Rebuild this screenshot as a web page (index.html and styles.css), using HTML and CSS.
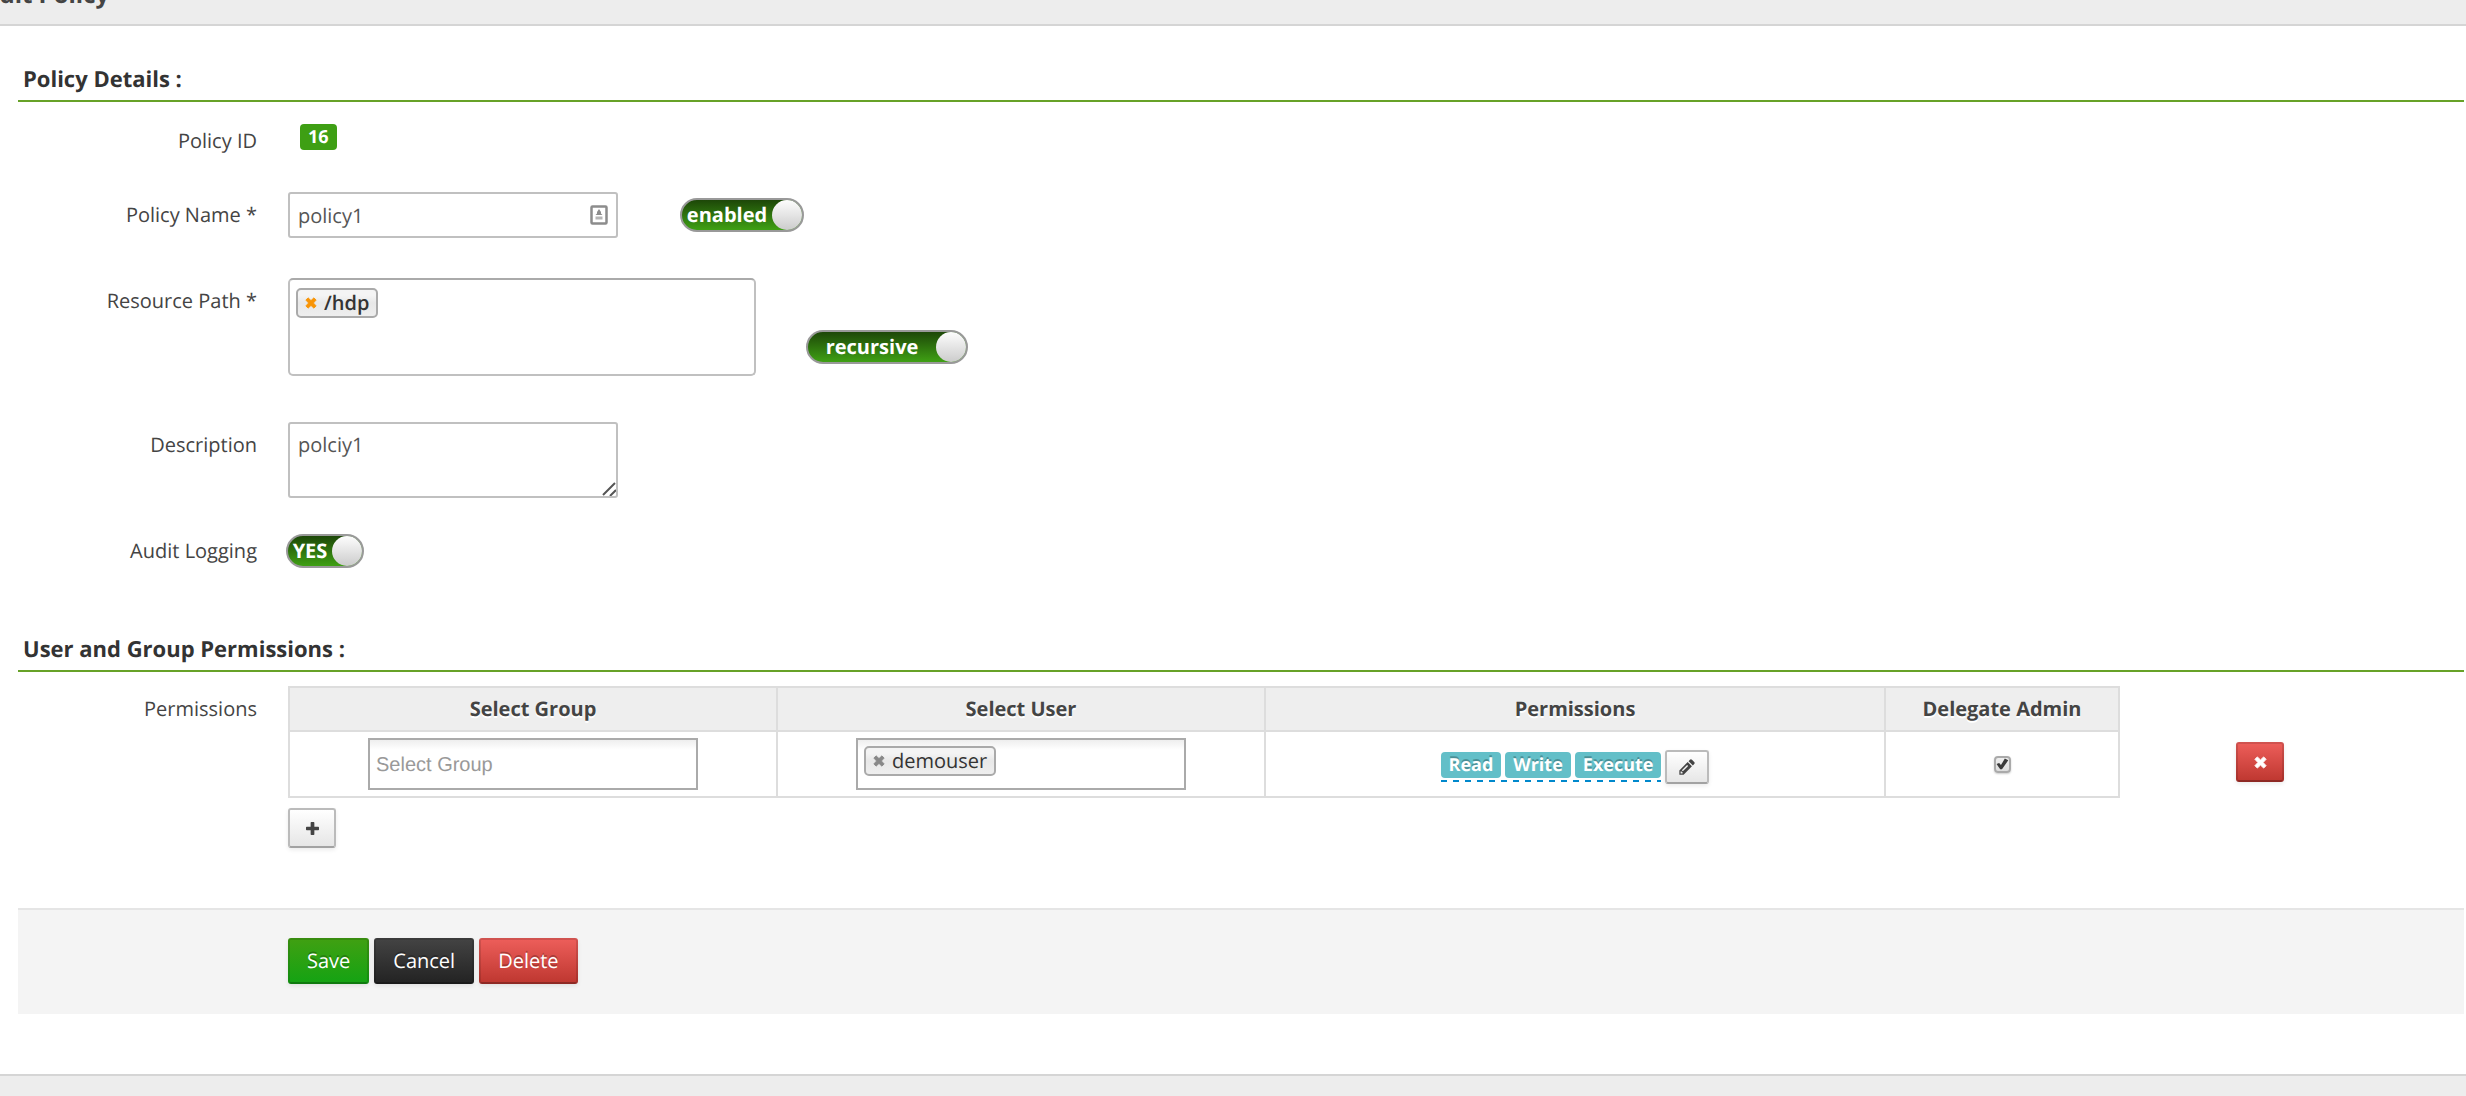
FILE: index.html
```html
<!DOCTYPE html>
<html lang="en">
<head>
<meta charset="utf-8">
<title>Edit Policy</title>
<link rel="stylesheet" href="styles.css">
</head>
<body>
<svg class="sprite" aria-hidden="true">
  <symbol id="times" viewBox="0 0 14 14"><path d="M1 3.600 3.600 1 7 4.200 10.400 1 13 3.600 9.800 7 13 10.400 10.400 13 7 9.800 3.600 13 1 10.400 4.200 7z" stroke="currentColor" stroke-linejoin="round"/></symbol>
  <symbol id="plus" viewBox="0 0 14 14"><path d="M5.800 0h2.400a.8.8 0 0 1 .8.800V5h4.200a.8.8 0 0 1 .8.800v2.400a.8.8 0 0 1-.8.800H9v4.200a.8.8 0 0 1-.8.800H5.800a.8.8 0 0 1-.8-.8V9H.8a.8.8 0 0 1-.8-.8V5.800A.8.8 0 0 1 .8 5H5V.8a.8.8 0 0 1 .8-.8z"/></symbol>
</svg>
<header class="page-head"><h1>Edit Policy</h1></header>
<main>
<form class="policy">
  <section>
    <h2>Policy Details :</h2>
    <div class="row row-id">
      <span class="label">Policy ID</span>
      <span class="badge id">16</span>
    </div>
    <div class="row row-name">
      <label class="label" for="name">Policy Name *</label>
      <div class="text-box">
        <input class="field" id="name" type="text" value="policy1">
        <svg class="card" viewBox="0 0 18 20" aria-hidden="true"><rect x="1.500" y="1.500" width="15" height="17" rx="1" fill="#fff" stroke="#8c8c8c" stroke-width="2.500"/><path d="M9 4l2 3v1.500l1.500 1.500h-7L7 8.500V7z" fill="#8c8c8c"/><path d="M5.500 11.500h7v3h-7z" fill="#b5b5b5"/></svg>
      </div>
      <button type="button" class="toggle enabled" aria-pressed="true"><span class="word">enabled</span><span class="knob"></span></button>
    </div>
    <div class="row row-path">
      <span class="label">Resource Path *</span>
      <div class="tags"><span class="tag path"><button type="button" aria-label="Remove /hdp"><svg><use href="#times"/></svg></button>/hdp</span></div>
      <button type="button" class="toggle recursive" aria-pressed="true"><span class="word">recursive</span><span class="knob"></span></button>
    </div>
    <div class="row row-desc">
      <label class="label" for="desc">Description</label>
      <div class="text-box">
        <textarea class="field area" id="desc">polciy1</textarea>
        <svg class="grip" viewBox="0 0 14 14" aria-hidden="true"><path d="M1 13 13 1M8 14l6-6" fill="none" stroke="#555" stroke-width="2"/></svg>
      </div>
    </div>
    <div class="row row-audit">
      <span class="label">Audit Logging</span>
      <button type="button" class="toggle yes" aria-pressed="true"><span class="word">YES</span><span class="knob"></span></button>
    </div>
  </section>
  <section>
    <h2>User and Group Permissions :</h2>
    <div class="row row-perm">
      <span class="label">Permissions</span>
      <div class="grid-box">
        <table>
          <thead><tr><th class="c-group">Select Group</th><th class="c-user">Select User</th><th class="c-perm">Permissions</th><th class="c-admin">Delegate Admin</th></tr></thead>
          <tbody><tr>
            <td><input class="picker" type="text" placeholder="Select Group" aria-label="Select Group"></td>
            <td><div class="picker users"><span class="tag"><button type="button" aria-label="Remove demouser"><svg><use href="#times"/></svg></button>demouser</span></div></td>
            <td><div class="perms"><a href="#" class="perm-list"><span class="badge">Read</span><span class="badge">Write</span><span class="badge">Execute</span></a><button type="button" class="btn small" aria-label="Edit permissions"><svg class="pencil" viewBox="0 0 16 16" aria-hidden="true"><path fill="currentColor" fill-rule="evenodd" d="M10.600 1.600a1.300 1.300 0 0 1 1.800 0l2 2a1.300 1.300 0 0 1 0 1.800l-1.200 1.200-3.800-3.800zM8.600 3.600l3.800 3.800L5 14.800H1.200V11zM3.400 10.900l.9.900 4.700-4.700-.9-.9zM2.300 12.100v1.600h1.600l.4-.5-1.500-1.500z"/></svg></button></div></td>
            <td><input type="checkbox" class="check" checked aria-label="Delegate Admin"></td>
          </tr></tbody>
        </table>
        <button type="button" class="btn add" aria-label="Add row"><svg class="icon"><use href="#plus"/></svg></button>
      </div>
      <button type="button" class="btn red remove" aria-label="Remove row"><svg class="icon"><use href="#times"/></svg></button>
    </div>
  </section>
  <div class="actions">
    <button type="button" class="btn green">Save</button>
    <button type="button" class="btn dark">Cancel</button>
    <button type="button" class="btn red">Delete</button>
  </div>
</form>
</main>
<footer class="page-foot"></footer>
</body>
</html>
```

FILE: styles.css
```css
* { box-sizing: border-box; }
html, body { height: 100%; }
body { margin: 0; display: flex; flex-direction: column; overflow-x: hidden; background: #fff; color: #444; font: 20px/30px "Open Sans", "Noto Sans", sans-serif; text-rendering: geometricPrecision; }
button, input, textarea { font: inherit; color: inherit; margin: 0; text-rendering: inherit; }
button { padding: 0; cursor: pointer; }
.sprite { display: none; }
.page-head { flex: none; display: flex; align-items: flex-end; height: 26px; overflow: hidden; background: #ededed; border-bottom: 2px solid #d5d5d5; }
h1 { margin: 0 0 14px -14px; font-size: 24px; line-height: 30px; }
.policy { margin: 36px 2px 60px 18px; }
h2 { margin: 0; padding: 0 5px 4px; border-bottom: 2px solid #67a228; color: #333; font-size: 22px; line-height: 34px; }
.row { display: flex; align-items: flex-start; }
.label { flex: none; width: 239px; margin-right: 31px; text-align: right; }
.badge { display: block; padding: 0 8px; border-radius: 4px; background: #63bfc8; color: #fff; font-size: 18px; font-weight: 700; line-height: 26px; text-shadow: 0 -2px 0 rgba(0,0,0,.25); }
.id { margin-left: 12px; background: #3e9f14; text-shadow: none; }
.row-id { padding-top: 22px; height: 90px; }
.row-id .label { padding-top: 2px; }
.row-name { height: 86px; }
.row-name .label, .row-path .label, .row-desc .label { padding-top: 8px; }
.text-box { position: relative; width: 330px; }
.field { display: block; width: 330px; height: 46px; padding: 6px 8px; border: 2px solid #c0c0c0; border-radius: 3px; background: #fff; color: #555; outline: 0; }
.card { position: absolute; right: 10px; top: 13px; width: 18px; height: 20px; }
.grip { position: absolute; right: 2px; bottom: 2px; width: 14px; height: 14px; pointer-events: none; }
.toggle { display: flex; justify-content: space-between; align-items: center; height: 34px; border: 2px solid #999; border-radius: 17px; background: linear-gradient(#1d4708, #3fa014); color: #fff; font-weight: 700; line-height: 30px; }
.word { flex: 1; text-align: center; }
.knob { flex: none; width: 30px; height: 30px; border-radius: 50%; background: linear-gradient(#fdfdfd, #ccc); }
.enabled { width: 124px; margin: 6px 0 0 62px; }
.recursive { width: 162px; margin: 52px 0 0 50px; }
.yes { width: 78px; margin-left: -2px; }
.row-path { height: 144px; }
.tags { width: 468px; height: 98px; padding: 8px 6px; border: 2px solid #c0c0c0; border-top-color: #aaa; border-radius: 5px; }
.tag { display: inline-flex; align-items: center; gap: 7px; height: 30px; padding: 0 7px; border: 2px solid #aaa; border-radius: 5px; background: linear-gradient(#f4f4f4 20%, #e8e8e8 50%, #eee); color: #333; line-height: 26px; vertical-align: top; }
.tag button { display: flex; border: 0; background: none; color: #888; }
.tag svg { width: 12px; height: 12px; fill: currentColor; }
.path { font-weight: 600; }
.path button { color: #f89406; }
.row-desc { height: 112px; }
.area { height: 76px; resize: none; }
.row-audit { height: 98px; }
.row-audit .label { padding-top: 2px; }
.row-perm { padding-top: 14px; height: 236px; }
.row-perm > .label { padding-top: 8px; }
.grid-box { flex: 0 1 1832px; min-width: 0; }
table { width: 100%; border-collapse: collapse; table-layout: fixed; }
th, td { border: 2px solid #ddd; padding: 6px; text-align: center; }
th { height: 44px; background: #eee; font-weight: 700; text-shadow: 0 2px 0 #fff; }
td { height: 66px; padding: 5px 6px; }
.c-group, .c-user { width: 488px; }
.c-admin { width: 234px; }
.picker { display: block; width: 330px; max-width: 100%; height: 52px; margin: 0 auto; padding: 8px 6px 6px; border: 2px solid #aaa; background: linear-gradient(#eee, #fff 10px); font-family: "Liberation Sans", sans-serif; text-align: left; }
.picker::placeholder { color: #999; opacity: 1; }
.users { padding-top: 6px; font-family: inherit; }
.perms { display: flex; justify-content: center; gap: 4px; padding-top: 6px; }
.perm-list { display: flex; gap: 4px; height: 30px; margin-top: 2px; background: repeating-linear-gradient(90deg, #08c 0 6px, transparent 6px 12px) bottom / 100% 2px no-repeat; text-decoration: none; }
.perm-list .badge { height: 26px; }
.btn { display: inline-flex; align-items: center; justify-content: center; width: 48px; height: 40px; border: 2px solid #bbb; border-bottom-color: #a2a2a2; border-radius: 3px; background: linear-gradient(#fff, #e6e6e6); box-shadow: 0 2px 4px rgba(0,0,0,.08); }
.small { width: 44px; height: 34px; }
.pencil { width: 18px; height: 18px; }
.icon { width: 13px; height: 13px; fill: currentColor; }
.check { appearance: none; display: block; width: 17px; height: 17px; margin: 0 auto; border: 2px solid #aaa; border-radius: 4px; background: linear-gradient(#eee, #ddd); box-shadow: 0 1px 2px rgba(0,0,0,.2); }
.check:checked::before { content: ""; display: block; width: 13px; height: 13px; background: #3a3a3a; clip-path: polygon(8% 50%, 28% 42%, 42% 58%, 72% 8%, 98% 22%, 50% 90%, 36% 90%); }
.add { margin-top: 10px; }
.green, .dark, .red { border-color: rgba(0,0,0,.12) rgba(0,0,0,.12) rgba(0,0,0,.25); background-origin: border-box; color: #fff; text-shadow: 0 -2px 0 rgba(0,0,0,.25); }
.green { background-image: linear-gradient(#41a012, #13a313); }
.dark { background-image: linear-gradient(#444, #222); }
.red { background-image: linear-gradient(#ee5f5b, #bd362f); }
.remove { flex: none; margin: 56px 0 0 116px; }
.actions { display: flex; gap: 5px; height: 106px; padding: 28px 0 0 270px; border-top: 2px solid #e5e5e5; background: #f4f4f4; }
.actions .btn { width: auto; height: 46px; padding: 0 17px; }
.page-foot { flex: 1; border-top: 2px solid #d5d5d5; background: #ededed; }
```
